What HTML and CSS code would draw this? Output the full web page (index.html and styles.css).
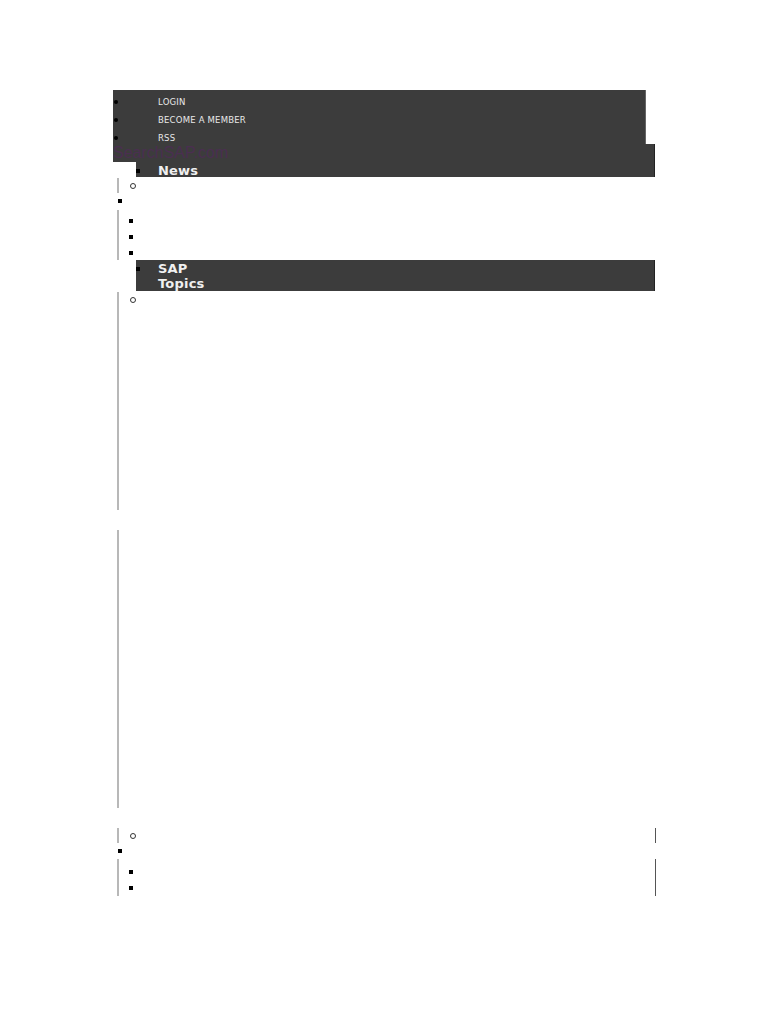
FILE: index.html
```html
<!DOCTYPE html>
<html>
<head>
<meta charset="utf-8">
<title>SearchSAP.com</title>
<link rel="stylesheet" href="styles.css">
</head>
<body>
<div class="page">
  <div class="topbar">
    <div class="toprow"><span class="disc"></span><span class="toplink">LOGIN</span></div>
    <div class="toprow"><span class="disc"></span><span class="toplink">BECOME A MEMBER</span></div>
    <div class="toprow"><span class="disc"></span><span class="toplink">RSS</span></div>
  </div>
  <div class="navrow">
    <div class="logocell"><span class="logo">SearchSAP.com</span></div>
    <div class="navbar news"><span class="sq sq-nav"></span><span class="navlabel">News</span></div>
  </div>
  <div class="body">
    <div class="box box-l row-c"><span class="circ"></span></div>
    <div class="row-s"><span class="sq"></span></div>
    <div class="box box-l box-three">
      <div class="row-i"><span class="sq"></span></div>
      <div class="row-i"><span class="sq"></span></div>
      <div class="row-i"><span class="sq"></span></div>
    </div>
    <div class="navbar topics"><span class="sq sq-nav"></span><span class="navlabel">SAP<br>Topics</span></div>
    <div class="box box-l box-tall1"><div class="row-c"><span class="circ"></span></div></div>
    <div class="box box-l box-tall2"></div>
    <div class="box box-lr row-c"><span class="circ"></span></div>
    <div class="row-s"><span class="sq"></span></div>
    <div class="box box-lr box-two">
      <div class="row-i"><span class="sq"></span></div>
      <div class="row-i"><span class="sq"></span></div>
    </div>
  </div>
</div>
</body>
</html>
```

FILE: styles.css
```css
html, body {
  margin: 0;
  padding: 0;
  background: #ffffff;
}
body {
  font-family: "DejaVu Sans", Verdana, sans-serif;
}
.page {
  padding: 90px 0 0 113px;
  width: 542px;
}
.topbar {
  width: 533px;
  height: 54px;
  box-sizing: border-box;
  padding-top: 3px;
  background: #3c3c3c;
  border-right: 1px solid #666;
}
.toprow {
  display: flex;
  align-items: center;
  height: 18px;
}
.disc {
  width: 4px;
  height: 4px;
  border-radius: 50%;
  background: #000;
  margin-left: 1px;
}
.toplink {
  margin-left: 40px;
  font-size: 8.5px;
  color: #e8e8e8;
  letter-spacing: 0.2px;
}
.navrow {
  display: flex;
  align-items: flex-start;
}
.logocell {
  width: 23px;
  height: 18px;
  background: #3c3c3c;
  position: relative;
  z-index: 1;
}
.logo {
  display: block;
  white-space: nowrap;
  font-family: "Liberation Sans", Arial, sans-serif;
  font-size: 16px;
  line-height: 18px;
  color: #4a2f50;
}
.navbar {
  display: flex;
  align-items: flex-start;
  width: 519px;
  box-sizing: border-box;
  background: #3c3c3c;
  border-right: 1px solid #222;
}
.news {
  height: 33px;
  padding-top: 19px;
}
.topics {
  height: 31px;
  padding-top: 1px;
  margin-left: 19px;
}
.navlabel {
  margin-left: 18px;
  font-weight: bold;
  font-size: 13px;
  line-height: 15px;
  color: #f0f0f0;
  letter-spacing: 0.2px;
}
.sq {
  display: block;
  width: 4px;
  height: 4px;
  background: #000;
}
.sq-nav {
  margin-top: 6px;
  margin-left: 0;
}
.circ {
  display: block;
  width: 4px;
  height: 4px;
  border: 1px solid #333;
  border-radius: 50%;
  margin-left: 11px;
}
.body {
  margin-left: 4px;
  width: 539px;
  padding-top: 1px;
}
.box {
  box-sizing: border-box;
}
.box-l {
  border-left: 2px solid #b8b8b8;
}
.box-lr {
  border-left: 2px solid #b8b8b8;
  border-right: 1px solid #555;
}
.row-c {
  display: flex;
  align-items: center;
  height: 15px;
}
.row-s {
  display: flex;
  align-items: center;
  height: 16px;
  padding-left: 1px;
}
.box-three {
  height: 50px;
  padding-top: 3px;
  margin-top: 1px;
}
.row-i {
  display: flex;
  align-items: center;
  height: 16px;
  padding-left: 10px;
}
.box-tall1 {
  height: 218px;
  margin-top: 1px;
}
.box-tall1 .row-c {
  height: 15px;
}
.box-tall2 {
  height: 278px;
  margin-top: 20px;
}
.box-lr.row-c {
  margin-top: 20px;
}
.box-two {
  height: 37px;
  padding-top: 5px;
}
```
